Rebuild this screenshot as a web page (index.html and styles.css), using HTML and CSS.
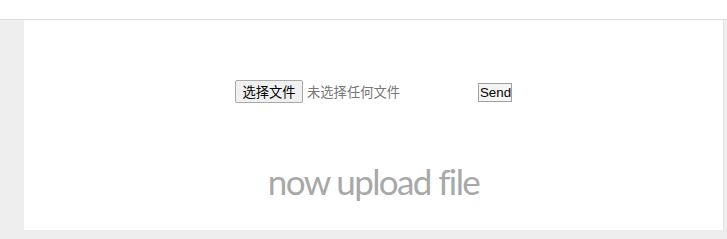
FILE: index.html
```html
<!DOCTYPE html>
<html>
<head>
<meta charset="utf-8">
<link rel="stylesheet" href="styles.css">
</head>
<body>
<div class="topbar"></div>
<div class="stage">
  <div class="panel">
    <form class="upload-row">
      <div class="file-widget">
        <span class="file-btn">选择文件</span>
        <span class="file-status">未选择任何文件</span>
      </div>
      <button type="button" class="send-btn">Send</button>
    </form>
    <h1 class="title">now upload file</h1>
  </div>
</div>
</body>
</html>
```
FILE: styles.css
```css
html, body {
  margin: 0;
  padding: 0;
  background: #eeeeee;
}
.topbar {
  height: 19px;
  background: #ffffff;
  border-bottom: 1px solid #dddddd;
}
.stage {
  padding: 0 3px 9px 24px;
  background: #eeeeee;
}
.panel {
  background: #ffffff;
  height: 210px;
  box-sizing: border-box;
  border-right: 1px solid #e4e4e4;
  display: flex;
  flex-direction: column;
  align-items: center;
}
.upload-row {
  margin-top: 60px;
  display: flex;
  align-items: center;
  gap: 4px;
  height: 23px;
}
.file-widget {
  width: 239px;
  display: flex;
  align-items: center;
  gap: 4px;
}
.file-btn {
  box-sizing: border-box;
  height: 23px;
  width: 68px;
  border: 1px solid #a9a9a9;
  border-radius: 2px;
  background: #f0f0f0;
  color: #000;
  font-family: "Noto Sans CJK SC", sans-serif;
  font-size: 13.3px;
  line-height: 21px;
  text-align: center;
}
.file-status {
  color: #777777;
  font-family: "Noto Sans CJK SC", sans-serif;
  font-size: 13.3px;
  line-height: 21px;
}
.send-btn {
  box-sizing: border-box;
  height: 19px;
  width: 34px;
  margin-top: 2px;
  padding: 0 1px;
  border: 1px solid #a0a0a0;
  border-radius: 0;
  background: #f4f4f4;
  color: #000;
  font-family: "Liberation Sans", Arial, sans-serif;
  font-size: 13.3px;
  line-height: 15px;
}
.title {
  margin: 58px 0 0 0;
  font-family: Lato, sans-serif;
  font-weight: 400;
  font-size: 35px;
  letter-spacing: -1.6px;
  line-height: 40px;
  color: #a8a8a8;
}
```
